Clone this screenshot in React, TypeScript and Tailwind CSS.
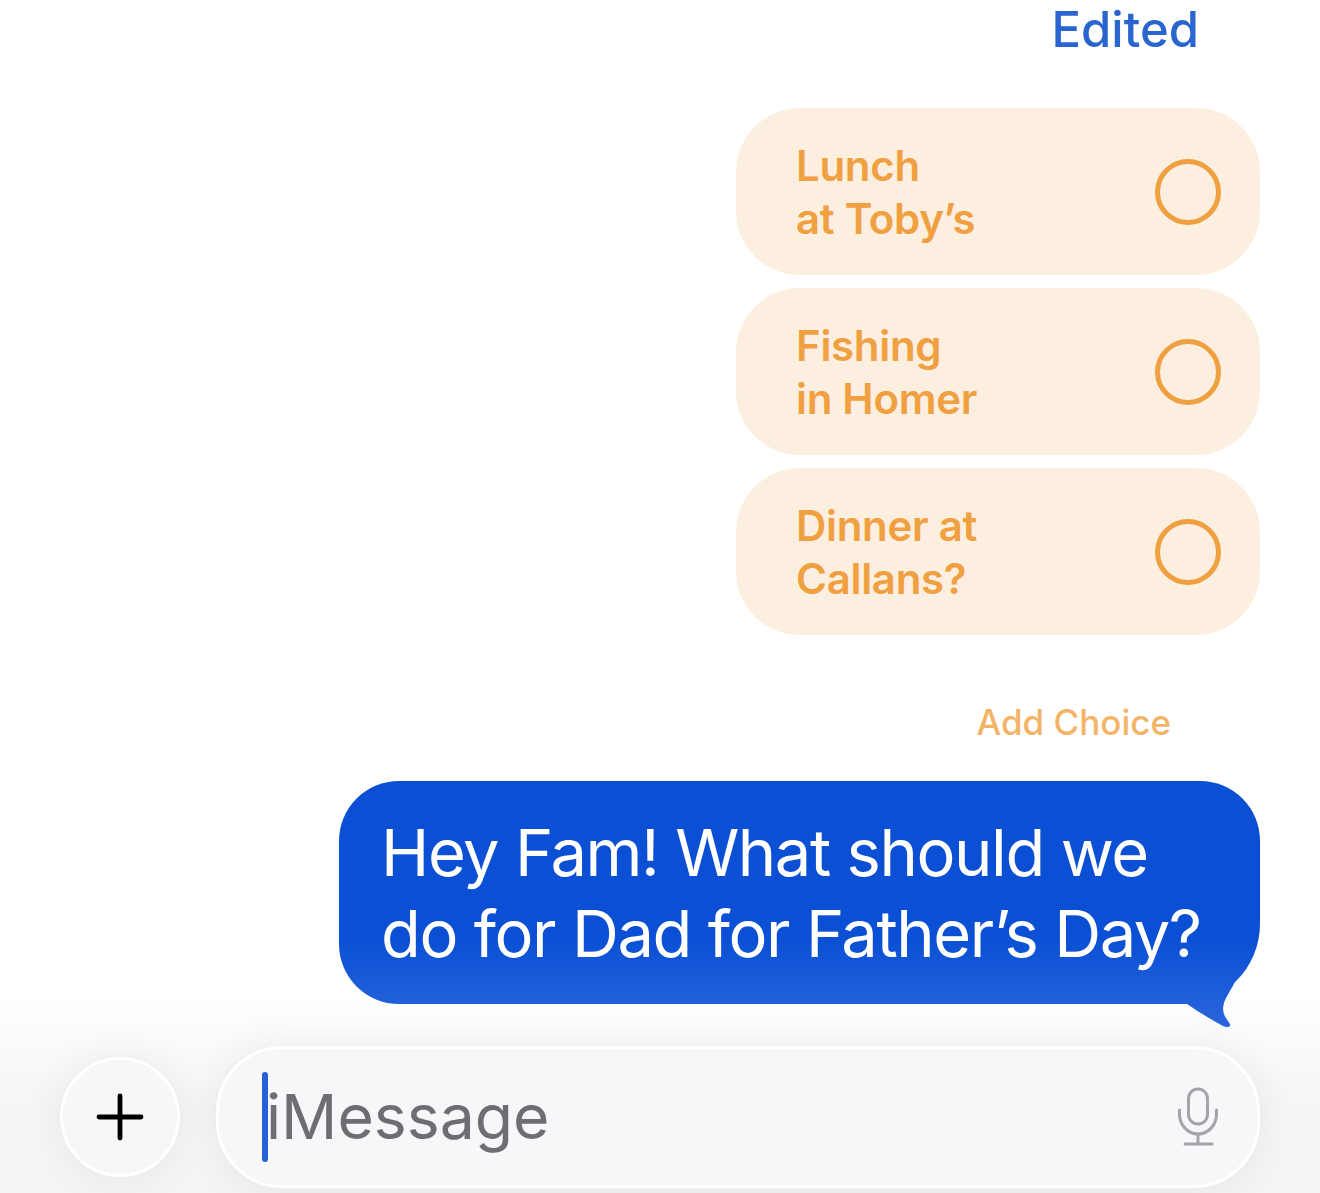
import { Plus } from "lucide-react";

const CHOICES = [
  ["Lunch", "at Toby's"],
  ["Fishing", "in Homer"],
  ["Dinner at", "Callans?"],
];

function ChoiceRow({ lines }: { lines: string[] }) {
  return (
    <div className="flex h-[167px] w-[524px] items-center justify-between rounded-[64px] bg-[#fcefdf] pl-[60px] pr-[39px]">
      <div className="text-[42px] font-semibold leading-[53px] tracking-[-0.3px] text-[#f0a040]">
        {lines.map((line) => (
          <div key={line}>{line.replace("'", "’")}</div>
        ))}
      </div>
      <div className="h-[66px] w-[66px] rounded-full border-[5px] border-[#f0a040]" />
    </div>
  );
}

function MicIcon() {
  return (
    <svg width="44" height="62" viewBox="0 0 44 62" fill="none" stroke="#a3a5a8" strokeWidth="3" strokeLinecap="round">
      <rect x="12.5" y="3" width="19" height="35" rx="9.5" />
      <path d="M3.5 24 v4 a18.5 20 0 0 0 37 0 v-4" />
      <path d="M22 48 V58" />
      <path d="M9 58 H36" />
    </svg>
  );
}

export default function App() {
  return (
    <div className="flex h-[1193px] w-full flex-col overflow-hidden bg-[linear-gradient(180deg,#ffffff_0%,#ffffff_83%,#f6f6f7_92%,#f4f4f5_100%)] font-['Inter',sans-serif]">
      <div className="flex flex-1 flex-col items-end pr-[60px]">
        <div className="mr-[61px] h-[60px] text-[49px] leading-[60px] font-medium text-[#2a64cf]">Edited</div>

        <div className="mt-[48px] flex flex-col gap-[13px]">
          {CHOICES.map((lines) => (
            <ChoiceRow key={lines[0]} lines={lines} />
          ))}
        </div>

        <div className="mr-[89px] mt-[65px] text-[35px] font-medium leading-[44px] text-[#f4b467]">Add Choice</div>

        <div className="relative mt-[37px] h-[223px] w-[921px] rounded-[60px] rounded-br-[80px] bg-[linear-gradient(180deg,#0a4fd4_0%,#0a4fd4_70%,#2260da_100%)] pl-[42px] pt-[31px] text-[65px] leading-[81px] tracking-[-1.42px] text-white">
          <div>Hey Fam! What should we</div>
          <div>do for Dad for Father’s Day?</div>
          <svg className="absolute bottom-[-26px] right-0" width="80" height="50" viewBox="0 0 80 50">
            <defs>
              <linearGradient id="tail" gradientUnits="userSpaceOnUse" x1="0" y1="0" x2="0" y2="47">
                <stop offset="0" stopColor="#1959d8" />
                <stop offset="0.5" stopColor="#2260da" />
                <stop offset="1" stopColor="#2a66dc" />
              </linearGradient>
            </defs>
            <path
              d="M0 24 L7 24 C20 33 32 40 43 46 C47 48 51 47 50 44 C46 38 41 33 44 23 C46 17 52 8 56 0 L0 0 Z"
              fill="url(#tail)"
            />
          </svg>
        </div>
      </div>

      <div className="flex items-center gap-[36px] pb-[5px] pl-[60px] pr-[60px]">
        <div className="flex h-[120px] w-[120px] shrink-0 items-center justify-center rounded-full border-[3px] border-white bg-[#f7f7f9] shadow-[0_0_40px_rgba(0,0,0,0.07)]">
          <Plus size={72} strokeWidth={1.6} className="text-black" />
        </div>
        <div className="flex h-[142px] flex-1 items-center justify-between rounded-[66px] border-[3px] border-white bg-[#f7f7f9] pl-[43px] pr-[37px] shadow-[0_0_40px_rgba(0,0,0,0.07)]">
          <div className="flex items-center">
            <div className="h-[90px] w-[6px] rounded-full bg-[#2460d8]" />
            <span className="-ml-[2px] text-[62.4px] leading-[80px] text-[#6d6d72]">iMessage</span>
          </div>
          <MicIcon />
        </div>
      </div>
    </div>
  );
}
